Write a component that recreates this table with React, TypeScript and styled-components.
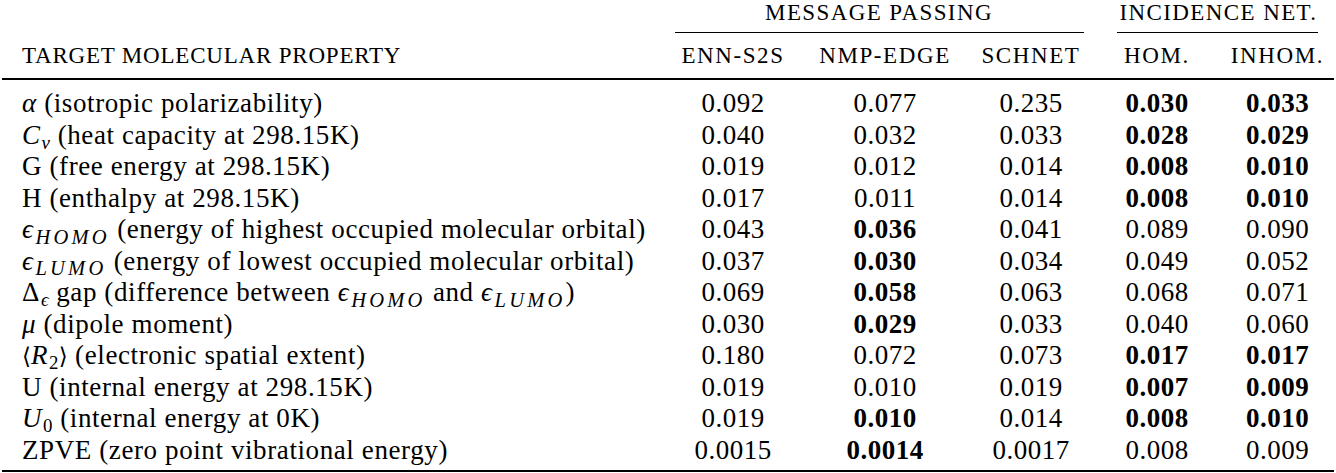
import React from 'react';
import styled, { createGlobalStyle } from 'styled-components';

const COLS = '663px 136px 168px 124px 128px 113px';

const GlobalStyle = createGlobalStyle`
  html, body { margin: 0; padding: 0; background: #fff; }
  body { font-family: "Liberation Serif", "Times New Roman", Times, serif; color: #000; }
`;

const Table = styled.div`
  width: 1332px;
  margin-left: 2px;
  display: flex;
  flex-direction: column;
  font-family: "Liberation Serif", "Times New Roman", Times, serif;
`;

const Row = styled.div`
  display: grid;
  grid-template-columns: ${COLS};
`;

const GroupRow = styled(Row)`
  height: 33px;
`;

const Group = styled.div<{ $from: number; $to: number }>`
  grid-column: ${(p) => p.$from} / ${(p) => p.$to};
  display: flex;
  flex-direction: column;
`;

const HeadText = styled.div`
  font-size: 23px;
  line-height: 25px;
  letter-spacing: 0.8px;
  text-transform: uppercase;
  white-space: nowrap;
`;

const GroupTitle = styled(HeadText)<{ $shift?: number }>`
  height: 32px;
  text-align: center;
  letter-spacing: 1.4px;
  padding-left: ${(p) => p.$shift ?? 0}px;
`;

const GroupRule = styled.div<{ $ml: number; $mr: number }>`
  height: 1px;
  background: #000;
  margin: 0 ${(p) => p.$mr}px 0 ${(p) => p.$ml}px;
`;

const HeadRow = styled(Row)`
  padding: 10px 0;
`;

const ColHead = styled(HeadText)`
  text-align: center;
  letter-spacing: 1.6px;
`;

const LabelHead = styled(HeadText)`
  padding-left: 20px;
  text-align: left;
`;

const Rule = styled.div`
  height: 2px;
  background: #000;
`;

const Body = styled.div`
  display: flex;
  flex-direction: column;
  padding: 8px 0 4px;
`;

const BodyRow = styled(Row)`
  height: 31.5px;
  font-size: 27px;
  line-height: 31.5px;
  letter-spacing: 0.6px;
  white-space: nowrap;
`;

const Label = styled.div`
  padding-left: 20px;
`;

const Num = styled.div<{ $bold?: boolean }>`
  text-align: center;
  letter-spacing: 0.5px;
  font-weight: ${(p) => (p.$bold ? 700 : 400)};
`;

const Var = styled.i`
  font-style: italic;
`;

const Sub = styled.sub<{ $italic?: boolean; $wide?: boolean }>`
  font-size: ${(p) => (p.$wide ? '0.76em' : '0.7em')};
  line-height: 0;
  vertical-align: -0.28em;
  margin-left: ${(p) => (p.$wide ? '2px' : '1px')};
  letter-spacing: ${(p) => (p.$wide ? '3.2px' : '0.3px')};
  font-style: ${(p) => (p.$italic ? 'italic' : 'normal')};
`;

const Angle = styled.span`
  font-family: "DejaVu Serif", serif;
  font-size: 0.85em;
  letter-spacing: 0;
`;

type RowData = { label: React.ReactNode; values: [string, boolean][] };

const eHomo = (
  <>
    <Var>ϵ</Var>
    <Sub $italic $wide>
      HOMO
    </Sub>
  </>
);
const eLumo = (
  <>
    <Var>ϵ</Var>
    <Sub $italic $wide>
      LUMO
    </Sub>
  </>
);

const rows: RowData[] = [
  {
    label: (
      <>
        <Var>α</Var> (isotropic polarizability)
      </>
    ),
    values: [['0.092', false], ['0.077', false], ['0.235', false], ['0.030', true], ['0.033', true]],
  },
  {
    label: (
      <>
        <Var>C</Var>
        <Sub $italic>v</Sub> (heat capacity at 298.15K)
      </>
    ),
    values: [['0.040', false], ['0.032', false], ['0.033', false], ['0.028', true], ['0.029', true]],
  },
  {
    label: <>G (free energy at 298.15K)</>,
    values: [['0.019', false], ['0.012', false], ['0.014', false], ['0.008', true], ['0.010', true]],
  },
  {
    label: <>H (enthalpy at 298.15K)</>,
    values: [['0.017', false], ['0.011', false], ['0.014', false], ['0.008', true], ['0.010', true]],
  },
  {
    label: <>{eHomo} (energy of highest occupied molecular orbital)</>,
    values: [['0.043', false], ['0.036', true], ['0.041', false], ['0.089', false], ['0.090', false]],
  },
  {
    label: <>{eLumo} (energy of lowest occupied molecular orbital)</>,
    values: [['0.037', false], ['0.030', true], ['0.034', false], ['0.049', false], ['0.052', false]],
  },
  {
    label: (
      <>
        Δ<Sub $italic>ϵ</Sub> gap (difference between {eHomo} and {eLumo})
      </>
    ),
    values: [['0.069', false], ['0.058', true], ['0.063', false], ['0.068', false], ['0.071', false]],
  },
  {
    label: (
      <>
        <Var>μ</Var> (dipole moment)
      </>
    ),
    values: [['0.030', false], ['0.029', true], ['0.033', false], ['0.040', false], ['0.060', false]],
  },
  {
    label: (
      <>
        <Angle>⟨</Angle>
        <Var>R</Var>
        <Sub>2</Sub>
        <Angle>⟩</Angle> (electronic spatial extent)
      </>
    ),
    values: [['0.180', false], ['0.072', false], ['0.073', false], ['0.017', true], ['0.017', true]],
  },
  {
    label: <>U (internal energy at 298.15K)</>,
    values: [['0.019', false], ['0.010', false], ['0.019', false], ['0.007', true], ['0.009', true]],
  },
  {
    label: (
      <>
        <Var>U</Var>
        <Sub>0</Sub> (internal energy at 0K)
      </>
    ),
    values: [['0.019', false], ['0.010', true], ['0.014', false], ['0.008', true], ['0.010', true]],
  },
  {
    label: <>ZPVE (zero point vibrational energy)</>,
    values: [['0.0015', false], ['0.0014', true], ['0.0017', false], ['0.008', false], ['0.009', false]],
  },
];

const headers = ['enn-s2s', 'nmp-edge', 'schnet', 'hom.', 'inhom.'];

export default function App() {
  return (
    <>
      <GlobalStyle />
      <Table>
        <GroupRow>
          <Group $from={2} $to={5}>
            <GroupTitle>Message Passing</GroupTitle>
            <GroupRule $ml={10} $mr={9} />
          </Group>
          <Group $from={5} $to={7}>
            <GroupTitle $shift={10}>Incidence Net.</GroupTitle>
            <GroupRule $ml={24} $mr={16} />
          </Group>
        </GroupRow>
        <HeadRow>
          <LabelHead>Target molecular property</LabelHead>
          {headers.map((h) => (
            <ColHead key={h}>{h}</ColHead>
          ))}
        </HeadRow>
        <Rule />
        <Body>
          {rows.map((r, i) => (
            <BodyRow key={i}>
              <Label>{r.label}</Label>
              {r.values.map(([v, b], j) => (
                <Num key={j} $bold={b}>
                  {v}
                </Num>
              ))}
            </BodyRow>
          ))}
        </Body>
        <Rule />
      </Table>
    </>
  );
}
